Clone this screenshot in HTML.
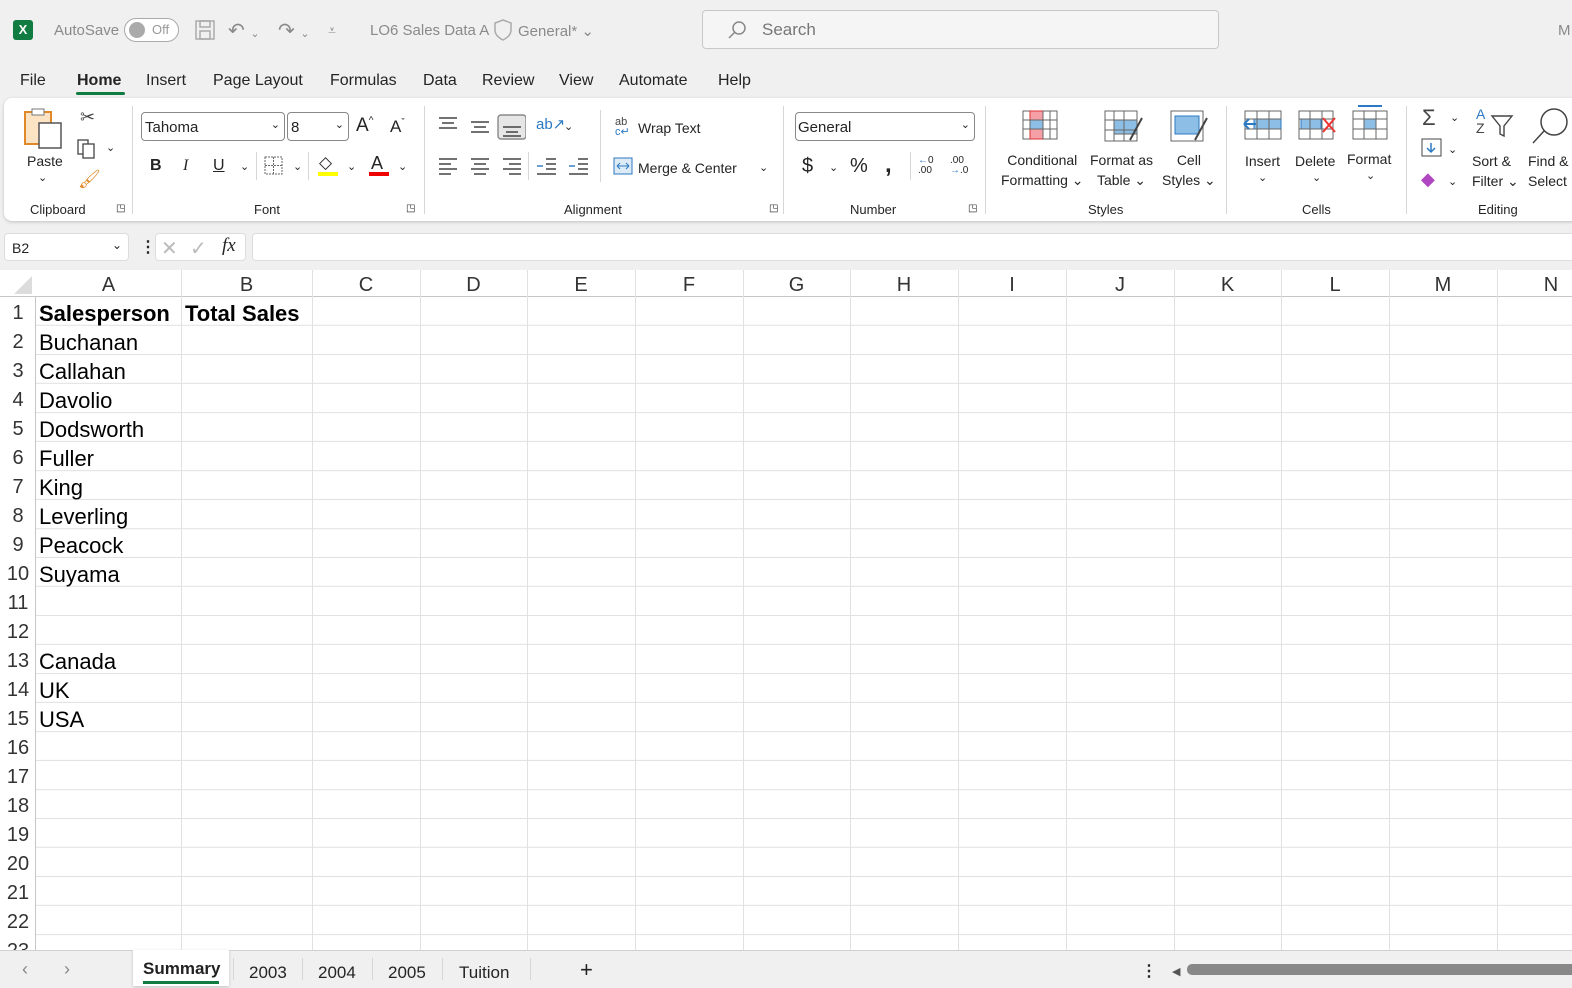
<!DOCTYPE html>
<html><head><meta charset="utf-8"><style>
*{margin:0;padding:0;box-sizing:border-box}
body{width:1572px;height:988px;overflow:hidden;background:#f0f0f0;font-family:"Liberation Sans",sans-serif;color:#242424;position:relative}
.a{position:absolute;white-space:nowrap}
.g{color:#8a8a8a}
.t{font-size:16px;top:72px}
.lbl{font-size:13px;top:202px}
.s14{font-size:14px}
.vl{position:absolute;top:270px;height:680px;width:1px;background:#e1e1e1}
.rn{position:absolute;left:0;width:36px;text-align:center;font-size:20px;color:#333;height:29px;line-height:29px;margin-top:2px}
.cell{position:absolute;left:39px;font-size:22px;color:#000;height:29px;line-height:29px;margin-top:2px;font-family:"Liberation Sans",sans-serif}
.ch{position:absolute;top:272px;height:27px;line-height:27px;text-align:center;font-size:20px;color:#333}
.sep{position:absolute;width:1px;background:#d6d6d6}
</style></head><body>
<!-- title bar -->
<div class="a" style="left:13px;top:20px;width:20px;height:20px;background:#107c41;border-radius:3px;color:#fff;font-weight:bold;font-size:13px;text-align:center;line-height:20px">X</div>
<div class="a g" style="left:54px;top:22px;font-size:15px">AutoSave</div>
<div class="a" style="left:124px;top:18px;width:55px;height:24px;border:1px solid #aaa;border-radius:12px;background:#fff"><div style="position:absolute;left:4px;top:3px;width:16px;height:16px;border-radius:8px;background:#aaa"></div><span style="position:absolute;left:27px;top:3px;font-size:13px;color:#999">Off</span></div>
<svg class="a" style="left:194px;top:19px" width="22" height="22" fill="none" stroke="#aaa" stroke-width="1.5"><rect x="2" y="2" width="18" height="18"/><rect x="6" y="2" width="10" height="6"/><rect x="6" y="12" width="10" height="8"/></svg>
<div class="a g" style="left:228px;top:18px;font-size:20px">↶ <span style="font-size:11px">⌄</span></div>
<div class="a g" style="left:278px;top:18px;font-size:20px">↷ <span style="font-size:11px">⌄</span></div>
<div class="a g" style="left:328px;top:22px;font-size:14px">⩡</div>
<div class="a g" style="left:370px;top:22px;font-size:15px">LO6 Sales Data A</div>
<svg class="a" style="left:493px;top:18px" width="20" height="24" fill="none" stroke="#aaa" stroke-width="1.5"><path d="M10 2 L18 5 V12 C18 17 14 20 10 22 C6 20 2 17 2 12 V5 Z"/></svg>
<div class="a g" style="left:518px;top:22px;font-size:15px">General* ⌄</div>
<div class="a" style="left:702px;top:10px;width:517px;height:39px;border:1px solid #c8c8c8;border-radius:4px;background:#f5f5f5"></div>
<svg class="a" style="left:726px;top:19px" width="22" height="22" fill="none" stroke="#888" stroke-width="1.5"><circle cx="13" cy="9" r="6"/><path d="M8.5 13.5 L3 19"/></svg>
<div class="a" style="left:762px;top:20px;font-size:17px;color:#777">Search</div>
<div class="a g" style="left:1558px;top:22px;font-size:15px">M</div>
<!-- tabs -->
<div class="a t" style="left:20px">File</div>
<div class="a t" style="left:77px;font-weight:bold">Home</div>
<div class="a" style="left:76px;top:92px;width:49px;height:3px;background:#107c41;border-radius:2px"></div>
<div class="a t" style="left:146px">Insert</div>
<div class="a t" style="left:213px">Page Layout</div>
<div class="a t" style="left:330px">Formulas</div>
<div class="a t" style="left:423px">Data</div>
<div class="a t" style="left:482px">Review</div>
<div class="a t" style="left:559px">View</div>
<div class="a t" style="left:619px">Automate</div>
<div class="a t" style="left:718px">Help</div>
<!-- ribbon -->
<div class="a" style="left:4px;top:98px;width:1580px;height:123px;background:#fff;border-radius:8px;box-shadow:0 1px 3px rgba(0,0,0,.2)"></div>
<div class="sep" style="left:132px;top:106px;height:108px"></div>
<div class="sep" style="left:424px;top:106px;height:108px"></div>
<div class="sep" style="left:783px;top:106px;height:108px"></div>
<div class="sep" style="left:985px;top:106px;height:108px"></div>
<div class="sep" style="left:1226px;top:106px;height:108px"></div>
<div class="sep" style="left:1406px;top:106px;height:108px"></div>
<!-- clipboard -->
<svg class="a" style="left:22px;top:107px" width="44" height="42"><rect x="3" y="5" width="26" height="32" fill="#fbe3c4" stroke="#e0892a" stroke-width="2"/><rect x="10" y="2" width="12" height="6" fill="#fff" stroke="#777"/><rect x="17" y="16" width="22" height="25" fill="#fff" stroke="#555" stroke-width="1.5"/></svg>
<div class="a s14" style="left:27px;top:153px">Paste</div>
<div class="a" style="left:38px;top:171px;font-size:11px">⌄</div>
<div class="a" style="left:80px;top:107px;font-size:18px;color:#444">✂</div>
<svg class="a" style="left:76px;top:138px" width="22" height="22" fill="none" stroke="#444" stroke-width="1.3"><rect x="2" y="2" width="10" height="14"/><rect x="7" y="6" width="11" height="14" fill="#fff"/></svg>
<div class="a" style="left:106px;top:141px;font-size:11px">⌄</div>
<div class="a" style="left:78px;top:169px;font-size:18px;color:#e0892a">🖌</div>
<div class="a lbl" style="left:30px">Clipboard</div>
<div class="a" style="left:116px;top:203px;font-size:10px">◳</div>
<!-- font -->
<div class="a" style="left:141px;top:112px;width:144px;height:29px;border:1px solid #888;border-radius:4px;font-size:15px;padding:6px 3px">Tahoma<span style="position:absolute;right:4px;top:5px;font-size:11px">⌄</span></div>
<div class="a" style="left:287px;top:112px;width:62px;height:29px;border:1px solid #888;border-radius:4px;font-size:15px;padding:6px 3px">8<span style="position:absolute;right:4px;top:5px;font-size:11px">⌄</span></div>
<div class="a" style="left:356px;top:115px;font-size:19px">A<sup style="font-size:10px">^</sup></div>
<div class="a" style="left:390px;top:117px;font-size:17px">A<sup style="font-size:10px">ˇ</sup></div>
<div class="a" style="left:150px;top:157px;font-size:16px;font-weight:bold">B</div>
<div class="a" style="left:183px;top:157px;font-size:16px;font-style:italic;font-family:'Liberation Serif'">I</div>
<div class="a" style="left:213px;top:157px;font-size:16px;text-decoration:underline">U</div>
<div class="a" style="left:240px;top:160px;font-size:11px">⌄</div>
<div class="sep" style="left:256px;top:152px;height:28px"></div>
<svg class="a" style="left:263px;top:155px" width="22" height="22" fill="none" stroke="#666" stroke-dasharray="2 1"><rect x="2" y="2" width="17" height="17"/><path d="M10.5 2V19M2 10.5H19"/></svg>
<div class="a" style="left:293px;top:160px;font-size:11px">⌄</div>
<div class="sep" style="left:308px;top:152px;height:28px"></div>
<div class="a" style="left:319px;top:153px;font-size:17px">◇</div>
<div class="a" style="left:318px;top:172px;width:20px;height:4px;background:#ffff00"></div>
<div class="a" style="left:347px;top:160px;font-size:11px">⌄</div>
<div class="a" style="left:371px;top:153px;font-size:18px">A</div>
<div class="a" style="left:369px;top:172px;width:20px;height:4px;background:#e00"></div>
<div class="a" style="left:398px;top:160px;font-size:11px">⌄</div>
<div class="a lbl" style="left:254px">Font</div>
<div class="a" style="left:406px;top:203px;font-size:10px">◳</div>
<!-- alignment -->
<svg class="a" style="left:436px;top:114px" width="90" height="26" stroke="#444" stroke-width="1.4"><path d="M3 4H21M6 9H18M3 14H21"/><path d="M35 8H53M38 13H50M35 18H53"/><rect x="62" y="1" width="28" height="24" rx="3" fill="#e6e6e6" stroke="#888"/><path d="M67 13H85M70 18H82M67 22H85"/></svg>
<div class="a" style="left:536px;top:115px;font-size:15px;color:#2b79c2">ab↗</div>
<div class="a" style="left:564px;top:120px;font-size:11px">⌄</div>
<svg class="a" style="left:436px;top:156px" width="155" height="22" stroke="#444" stroke-width="1.4"><path d="M3 3H21M3 8H15M3 13H21M3 18H15"/><path d="M35 3H53M38 8H50M35 13H53M38 18H50"/><path d="M67 3H85M73 8H85M67 13H85M73 18H85"/><path d="M110 3H120M110 8H120M110 13H120M101 18H120"/><path d="M101 10H107" stroke="#2b79c2"/><path d="M142 3H152M142 8H152M142 13H152M133 18H152"/><path d="M133 10H139" stroke="#2b79c2"/></svg>
<div class="sep" style="left:528px;top:152px;height:28px"></div>
<div class="sep" style="left:600px;top:110px;height:72px"></div>
<div class="a" style="left:615px;top:117px;font-size:11px;color:#444;line-height:10px">ab<br><span style="color:#2b79c2">c↵</span></div>
<div class="a s14" style="left:638px;top:120px">Wrap Text</div>
<svg class="a" style="left:613px;top:157px" width="20" height="18" fill="#ddebf7" stroke="#2b79c2"><rect x="1" y="1" width="18" height="16"/><path d="M4 9H16M4 9L7 6M4 9L7 12M16 9L13 6M16 9L13 12"/></svg>
<div class="a s14" style="left:638px;top:160px">Merge &amp; Center</div>
<div class="a" style="left:759px;top:161px;font-size:11px">⌄</div>
<div class="a lbl" style="left:564px">Alignment</div>
<div class="a" style="left:769px;top:203px;font-size:10px">◳</div>
<!-- number -->
<div class="a" style="left:795px;top:112px;width:180px;height:29px;border:1px solid #888;border-radius:4px;font-size:15px;padding:6px 2px">General<span style="position:absolute;right:4px;top:5px;font-size:11px">⌄</span></div>
<div class="a" style="left:802px;top:155px;font-size:20px">$</div>
<div class="a" style="left:829px;top:161px;font-size:11px">⌄</div>
<div class="a" style="left:850px;top:155px;font-size:20px">%</div>
<div class="a" style="left:885px;top:151px;font-size:24px;font-weight:bold">,</div>
<div class="sep" style="left:910px;top:152px;height:28px"></div>
<div class="a" style="left:918px;top:156px;font-size:10px;line-height:10px"><span style="color:#2b79c2">←</span>0<br>.00</div>
<div class="a" style="left:950px;top:156px;font-size:10px;line-height:10px">.00<br><span style="color:#2b79c2">→</span>.0</div>
<div class="a lbl" style="left:850px">Number</div>
<div class="a" style="left:968px;top:203px;font-size:10px">◳</div>
<!-- styles -->
<svg class="a" style="left:1022px;top:110px" width="36" height="30" stroke="#666" fill="#fff"><rect x="1" y="1" width="34" height="28"/><rect x="8" y="1" width="13" height="9" fill="#f4a0a6" stroke="#d33"/><rect x="8" y="10" width="13" height="9" fill="#8dbfe6"/><rect x="8" y="19" width="13" height="10" fill="#f4a0a6" stroke="#d33"/><path d="M1 10H35M1 19H35M21 1V29M28 1V29"/></svg>
<svg class="a" style="left:1104px;top:110px" width="40" height="36" stroke="#666" fill="#fff"><rect x="1" y="1" width="32" height="30"/><rect x="10" y="10" width="23" height="14" fill="#8dbfe6"/><path d="M1 10H33M1 20H33M10 1V31M20 1V31"/><path d="M38 8L26 30" stroke="#444" stroke-width="2"/></svg>
<svg class="a" style="left:1170px;top:110px" width="38" height="36" stroke="#666" fill="#fff"><rect x="1" y="1" width="32" height="30"/><rect x="5" y="6" width="24" height="18" fill="#8dbfe6" stroke="#2b79c2"/><path d="M37 8L25 30" stroke="#444" stroke-width="2"/></svg>
<div class="a s14" style="left:1001px;top:150px;text-align:center;line-height:20px">Conditional<br>Formatting ⌄</div>
<div class="a s14" style="left:1090px;top:150px;text-align:center;line-height:20px">Format as<br>Table ⌄</div>
<div class="a s14" style="left:1162px;top:150px;text-align:center;line-height:20px">Cell<br>Styles ⌄</div>
<div class="a lbl" style="left:1088px">Styles</div>
<!-- cells -->
<svg class="a" style="left:1242px;top:110px" width="42" height="30" stroke="#666" fill="#fff"><rect x="3" y="1" width="36" height="28"/><rect x="12" y="9" width="27" height="10" fill="#8dbfe6" stroke="#2b79c2"/><path d="M3 9H39M3 19H39M15 1V29M27 1V29"/><path d="M2 14H14M2 14L7 9M2 14L7 19" stroke="#2b79c2" stroke-width="2"/></svg>
<svg class="a" style="left:1298px;top:110px" width="40" height="30" stroke="#666" fill="#fff"><rect x="1" y="1" width="34" height="28"/><rect x="3" y="9" width="20" height="10" fill="#8dbfe6" stroke="#2b79c2"/><path d="M1 9H35M1 19H35M12 1V29M24 1V29"/><path d="M25 8L37 22M37 8L25 22" stroke="#e33" stroke-width="2"/></svg>
<svg class="a" style="left:1352px;top:104px" width="36" height="36" stroke="#666" fill="#fff"><path d="M6 2H30" stroke="#2b79c2" stroke-width="2"/><rect x="1" y="7" width="34" height="28"/><rect x="12" y="15" width="12" height="10" fill="#8dbfe6" stroke="#2b79c2"/><path d="M1 15H35M1 25H35M12 7V35M24 7V35"/></svg>
<div class="a s14" style="left:1245px;top:153px">Insert</div>
<div class="a s14" style="left:1295px;top:153px">Delete</div>
<div class="a s14" style="left:1347px;top:151px">Format</div>
<div class="a" style="left:1258px;top:171px;font-size:11px">⌄</div>
<div class="a" style="left:1312px;top:171px;font-size:11px">⌄</div>
<div class="a" style="left:1366px;top:169px;font-size:11px">⌄</div>
<div class="a lbl" style="left:1302px">Cells</div>
<!-- editing -->
<div class="a" style="left:1422px;top:105px;font-size:22px;color:#444">Σ</div>
<div class="a" style="left:1450px;top:111px;font-size:11px">⌄</div>
<svg class="a" style="left:1421px;top:138px" width="22" height="20" fill="none" stroke="#444"><rect x="1" y="1" width="19" height="17"/><path d="M10 5V14M6 10L10 14L14 10" stroke="#2b79c2" stroke-width="1.5"/></svg>
<div class="a" style="left:1448px;top:143px;font-size:11px">⌄</div>
<div class="a" style="left:1421px;top:169px;font-size:18px;color:#b146c2">◆</div>
<div class="a" style="left:1448px;top:175px;font-size:11px">⌄</div>
<div class="a" style="left:1476px;top:107px;font-size:14px;line-height:14px;color:#2b79c2">A<br><span style="color:#444">Z</span></div>
<svg class="a" style="left:1490px;top:114px" width="24" height="26" fill="none" stroke="#444" stroke-width="1.4"><path d="M2 2H22L14 12V22L10 20V12Z"/></svg>
<svg class="a" style="left:1530px;top:106px" width="42" height="40" fill="none" stroke="#444" stroke-width="1.5"><circle cx="24" cy="16" r="13"/><path d="M14 25L3 37"/></svg>
<div class="a s14" style="left:1472px;top:151px;line-height:20px">Sort &amp;<br>Filter ⌄</div>
<div class="a s14" style="left:1528px;top:151px;line-height:20px">Find &amp;<br>Select</div>
<div class="a lbl" style="left:1478px">Editing</div>
<!-- formula bar -->
<div class="a" style="left:4px;top:233px;width:125px;height:28px;background:#fff;border:1px solid #ddd;border-radius:4px;font-size:14px;padding:6px 7px">B2<span style="position:absolute;right:6px;top:4px;font-size:12px">⌄</span></div>
<div class="a" style="left:140px;top:237px;font-size:16px;font-weight:bold">⋮</div>
<div class="a" style="left:155px;top:233px;width:91px;height:28px;background:#fff;border:1px solid #ddd;border-radius:4px"></div>
<div class="a" style="left:161px;top:236px;font-size:20px;color:#bbb">✕</div>
<div class="a" style="left:190px;top:236px;font-size:20px;color:#bbb">✓</div>
<div class="a" style="left:222px;top:235px;font-size:19px;font-style:italic;font-family:'Liberation Serif'">fx</div>
<div class="a" style="left:252px;top:233px;width:1330px;height:28px;background:#fff;border:1px solid #ddd;border-radius:4px"></div>
<!-- grid -->
<div class="a" style="left:0;top:270px;width:1572px;height:680px;background:#fff repeating-linear-gradient(to bottom,transparent 0 28px,#e1e1e1 28px 29px);background-position:0 27px"></div>
<div class="a" style="left:0;top:270px;width:1572px;height:27px;background:#fff;border-bottom:1px solid #c6c6c6"></div>
<div class="a" style="left:0;top:297px;width:36px;height:653px;background:#fff;border-right:1px solid #c6c6c6"></div>
<svg class="a" style="left:12px;top:276px" width="22" height="20"><path d="M20 0V18H2Z" fill="#dcdcdc"/></svg>
<div class="vl" style="left:181px"></div><div class="vl" style="left:312px"></div><div class="vl" style="left:420px"></div><div class="vl" style="left:527px"></div><div class="vl" style="left:635px"></div><div class="vl" style="left:743px"></div><div class="vl" style="left:850px"></div><div class="vl" style="left:958px"></div><div class="vl" style="left:1066px"></div><div class="vl" style="left:1174px"></div><div class="vl" style="left:1281px"></div><div class="vl" style="left:1389px"></div><div class="vl" style="left:1497px"></div>
<div class="ch" style="left:36px;width:145px">A</div><div class="ch" style="left:181px;width:131px">B</div><div class="ch" style="left:312px;width:108px">C</div><div class="ch" style="left:420px;width:107px">D</div><div class="ch" style="left:527px;width:108px">E</div><div class="ch" style="left:635px;width:108px">F</div><div class="ch" style="left:743px;width:107px">G</div><div class="ch" style="left:850px;width:108px">H</div><div class="ch" style="left:958px;width:108px">I</div><div class="ch" style="left:1066px;width:108px">J</div><div class="ch" style="left:1174px;width:107px">K</div><div class="ch" style="left:1281px;width:108px">L</div><div class="ch" style="left:1389px;width:108px">M</div><div class="ch" style="left:1497px;width:108px">N</div>
<div class="rn" style="top:297px">1</div><div class="rn" style="top:326px">2</div><div class="rn" style="top:355px">3</div><div class="rn" style="top:384px">4</div><div class="rn" style="top:413px">5</div><div class="rn" style="top:442px">6</div><div class="rn" style="top:471px">7</div><div class="rn" style="top:500px">8</div><div class="rn" style="top:529px">9</div><div class="rn" style="top:558px">10</div><div class="rn" style="top:587px">11</div><div class="rn" style="top:616px">12</div><div class="rn" style="top:645px">13</div><div class="rn" style="top:674px">14</div><div class="rn" style="top:703px">15</div><div class="rn" style="top:732px">16</div><div class="rn" style="top:761px">17</div><div class="rn" style="top:790px">18</div><div class="rn" style="top:819px">19</div><div class="rn" style="top:848px">20</div><div class="rn" style="top:877px">21</div><div class="rn" style="top:906px">22</div><div class="rn" style="top:935px">23</div>
<div class="cell" style="top:297px;font-weight:bold">Salesperson</div>
<div class="cell" style="top:297px;left:185px;font-weight:bold">Total Sales</div>
<div class="cell" style="top:326px">Buchanan</div><div class="cell" style="top:355px">Callahan</div><div class="cell" style="top:384px">Davolio</div><div class="cell" style="top:413px">Dodsworth</div><div class="cell" style="top:442px">Fuller</div><div class="cell" style="top:471px">King</div><div class="cell" style="top:500px">Leverling</div><div class="cell" style="top:529px">Peacock</div><div class="cell" style="top:558px">Suyama</div>
<div class="cell" style="top:645px">Canada</div><div class="cell" style="top:674px">UK</div><div class="cell" style="top:703px">USA</div>
<!-- sheet tabs -->
<div class="a" style="left:0;top:950px;width:1572px;height:38px;background:#f0f0f0;border-top:1px solid #d0d0d0"></div>
<div class="a" style="left:22px;top:959px;font-size:18px;color:#888">‹</div>
<div class="a" style="left:64px;top:959px;font-size:18px;color:#888">›</div>
<div class="a" style="left:133px;top:950px;width:96px;height:36px;background:#fff;box-shadow:0 1px 3px rgba(0,0,0,.2)"></div>
<div class="a" style="left:143px;top:959px;font-size:17px;font-weight:bold;color:#222">Summary</div>
<div class="a" style="left:143px;top:981px;width:76px;height:3px;background:#107c41"></div>
<div class="a" style="left:249px;top:963px;font-size:17px">2003</div>
<div class="a" style="left:318px;top:963px;font-size:17px">2004</div>
<div class="a" style="left:388px;top:963px;font-size:17px">2005</div>
<div class="a" style="left:459px;top:963px;font-size:17px">Tuition</div>
<div class="sep" style="left:233px;top:958px;height:22px"></div><div class="sep" style="left:302px;top:958px;height:22px"></div><div class="sep" style="left:372px;top:958px;height:22px"></div><div class="sep" style="left:442px;top:958px;height:22px"></div><div class="sep" style="left:530px;top:958px;height:22px"></div>
<div class="a" style="left:580px;top:957px;font-size:22px">+</div>
<div class="a" style="left:1141px;top:961px;font-size:16px;font-weight:bold">⋮</div>
<div class="a" style="left:1172px;top:965px;font-size:11px;color:#555">◀</div>
<div class="a" style="left:1187px;top:964px;width:390px;height:11px;background:#888;border-radius:5px"></div>
</body></html>
